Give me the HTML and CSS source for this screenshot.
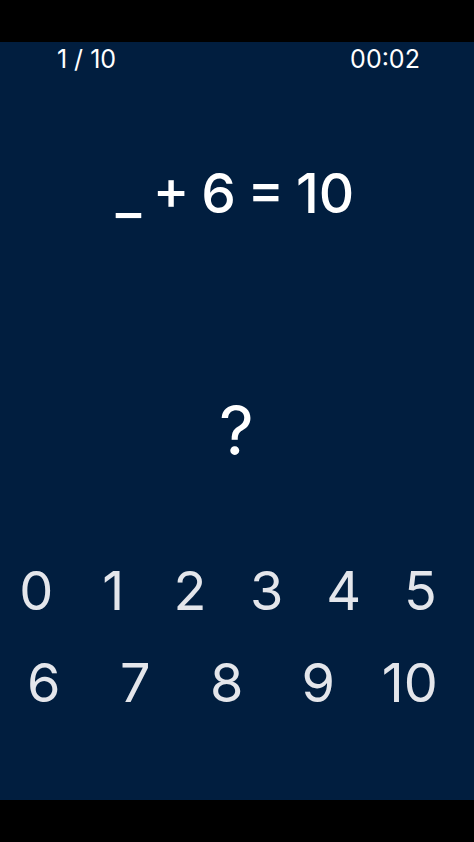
FILE: index.html
```html
<!DOCTYPE html>
<html lang="en">
<head>
<meta charset="utf-8">
<title>Quiz</title>
<link rel="stylesheet" href="styles.css">
</head>
<body>
<div class="bar"></div>
<main class="app">
  <header class="status">
    <span class="cell">1 / 10</span>
    <span class="cell">00:02</span>
  </header>
  <div class="equation">_ + 6 = 10</div>
  <div class="answer">?</div>
  <div class="keys row1">
    <button class="key">0</button>
    <button class="key">1</button>
    <button class="key">2</button>
    <button class="key">3</button>
    <button class="key">4</button>
    <button class="key">5</button>
  </div>
  <div class="keys row2">
    <button class="key">6</button>
    <button class="key">7</button>
    <button class="key">8</button>
    <button class="key">9</button>
    <button class="key">10</button>
  </div>
</main>
<div class="bar"></div>
</body>
</html>
```
FILE: styles.css
```css
html, body {
  margin: 0;
  padding: 0;
  background: #000;
}
body {
  width: 474px;
  height: 842px;
  display: flex;
  flex-direction: column;
  font-family: Inter, "DejaVu Sans", sans-serif;
  overflow: hidden;
}
.bar {
  height: 42px;
  background: #000;
  flex: none;
}
.app {
  height: 758px;
  background: #011e3f;
  display: flex;
  flex-direction: column;
  color: #fff;
}
.status {
  display: flex;
  justify-content: space-between;
  padding: 5px 9px 0 6.5px;
  font-size: 25px;
  line-height: 25px;
}
.cell {
  width: 160px;
  text-align: center;
}
.equation {
  margin-top: 94px;
  font-size: 55px;
  line-height: 55px;
  font-weight: 500;
  text-align: center;
  padding-right: 4px;
  word-spacing: -3px;
}
.answer {
  margin-top: 175px;
  font-size: 68px;
  line-height: 68px;
  text-align: center;
  padding-right: 1px;
}
.keys {
  display: grid;
  margin-left: -2px;
}
.row1 {
  margin-top: 100px;
  grid-template-columns: repeat(6, 76.8px);
}
.row2 {
  margin-top: 38px;
  grid-template-columns: repeat(5, 91.5px);
}
.key {
  background: none;
  border: 0;
  padding: 0;
  margin: 0;
  font-family: inherit;
  font-size: 54px;
  line-height: 54px;
  color: #e4e6eb;
  text-align: center;
}
```
